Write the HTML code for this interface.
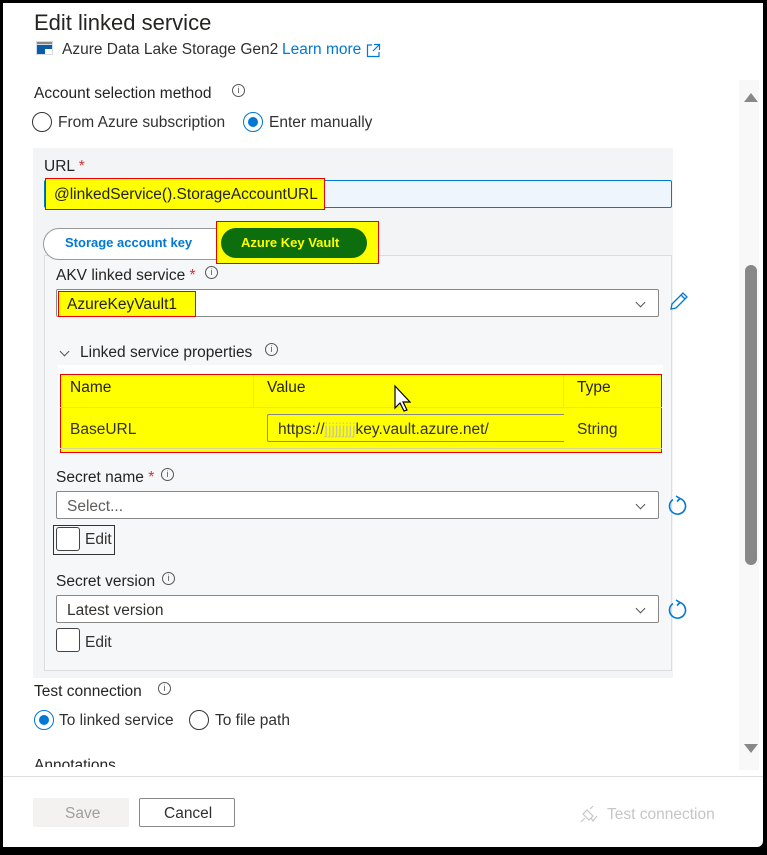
<!DOCTYPE html>
<html><head><meta charset="utf-8"><style>
*{box-sizing:border-box;margin:0;padding:0}
body{width:767px;height:855px;background:#000;font-family:"Liberation Sans",sans-serif;color:#323130;position:relative;overflow:hidden}
.page{position:absolute;left:3px;top:3px;width:760px;height:844px;background:#fff;border-radius:0 0 6px 0}
.a{position:absolute}
.t{font-size:15.5px;white-space:nowrap}
.lb{font-weight:500;color:#252423}
.radio{position:absolute;width:20px;height:20px;border:1px solid #333;border-radius:50%;background:#fff}
.radio.on{border-color:#0078d4}
.radio.on:after{content:"";position:absolute;left:4px;top:4px;width:10px;height:10px;border-radius:50%;background:#0078d4}
.info{position:absolute;width:13px;height:13px;border:1px solid #555;border-radius:50%;font-size:9px;line-height:11px;text-align:center;color:#555}
.req{color:#d13438}
.input{position:absolute;background:#fff;border:1px solid #8a8886;border-radius:2px}
.chev{position:absolute;width:7px;height:7px;border-right:1px solid #555;border-bottom:1px solid #555;transform:rotate(45deg)}
.cb{position:absolute;width:24px;height:24px;border:1px solid #444;border-radius:3px;background:#fff}
</style></head><body>
<div class="page">
<div class="a" style="left:31px;top:7px;font-size:22px;color:#252423">Edit linked service</div>
<svg class="a" style="left:33px;top:38px" width="17" height="14"><rect width="17" height="14" fill="#d6dae0"/><rect x="1" y="4" width="15" height="9" fill="#0a5ca8"/><rect x="9" y="8" width="7" height="5" fill="#fff"/><rect x="1" y="1" width="15" height="2" fill="#888"/></svg>
<div class="a t" style="left:59px;top:38px">Azure Data Lake Storage Gen2</div>
<div class="a t" style="left:279px;top:38px;color:#0078d4">Learn more</div>
<svg class="a" style="left:363px;top:40px" width="15" height="15" fill="none" stroke="#0078d4" stroke-width="1.2"><path d="M6 2H1.5v11.5H13V9M8 1.5h5.5V7M13.5 1.5L7 8"/></svg>

<div class="a t lb" style="left:31px;top:82px">Account selection method</div>
<div class="info" style="left:229px;top:81px">i</div>
<div class="radio" style="left:29px;top:109px"></div>
<div class="a t" style="left:55px;top:111px">From Azure subscription</div>
<div class="radio on" style="left:240px;top:109px"></div>
<div class="a t" style="left:266px;top:111px">Enter manually</div>

<div class="a" style="left:30px;top:145px;width:640px;height:530px;background:#f3f4f6"></div>
<div class="a t lb" style="left:41px;top:155px">URL <span class="req">*</span></div>
<div class="a" style="left:41px;top:177px;width:628px;height:28px;background:#eef5fd;border:1px solid #0078d4;border-radius:2px"></div>
<div class="a" style="left:42px;top:175px;width:280px;height:32px;background:#ffff00;border:1px solid #e00"></div>
<div class="a t" style="left:51px;top:183px;color:#222">@linkedService().StorageAccountURL</div>

<div class="a" style="left:41px;top:252px;width:628px;height:416px;background:#f6f7f9;border:1px solid #ddd"></div>
<div class="a" style="left:40px;top:225px;width:336px;height:32px;border:1px solid #999;border-radius:16px;background:#fff"></div>
<div class="a" style="left:62px;top:232px;font-size:13px;font-weight:bold;color:#0078d4">Storage account key</div>
<div class="a" style="left:213px;top:218px;width:163px;height:43px;background:#ffff00;border:1px solid #e00"></div>
<div class="a" style="left:218px;top:225px;width:146px;height:30px;border-radius:15px;background:#0d6e0d"></div>
<div class="a" style="left:238px;top:232px;font-size:13px;font-weight:bold;color:#ffff00">Azure Key Vault</div>

<div class="a t lb" style="left:53px;top:264px">AKV linked service <span class="req">*</span></div>
<div class="info" style="left:202px;top:263px">i</div>
<div class="input" style="left:53px;top:286px;width:603px;height:28px"></div>
<div class="a" style="left:55px;top:288px;width:138px;height:26px;background:#ffff00;border:1px solid #e00"></div>
<div class="a t" style="left:64px;top:293px;color:#222">AzureKeyVault1</div>
<div class="chev" style="left:634px;top:296px"></div>
<svg class="a" style="left:666px;top:288px" width="20" height="20" fill="none" stroke="#0078d4" stroke-width="1.3"><path d="M2 18l1-5L14 2l4 4L7 17z M12 4l4 4"/></svg>

<div class="chev" style="left:58px;top:345px"></div>
<div class="a t lb" style="left:77px;top:341px">Linked service properties</div>
<div class="info" style="left:262px;top:340px">i</div>
<div class="a" style="left:55px;top:362px;width:605px;height:88px;background:#fff"></div>
<div class="a" style="left:57px;top:371px;width:602px;height:79px;background:#ffff00;border:1px solid #e00"></div>
<div class="a" style="left:57px;top:404px;width:602px;height:1px;background:#d8d8a0"></div>
<div class="a" style="left:57px;top:445px;width:602px;height:1px;background:#d8d8a0"></div>
<div class="a" style="left:250px;top:372px;width:1px;height:32px;background:#d8d8a0"></div>
<div class="a" style="left:560px;top:372px;width:1px;height:32px;background:#d8d8a0"></div>
<div class="a t lb" style="left:67px;top:376px">Name</div>
<div class="a t lb" style="left:264px;top:376px">Value</div>
<div class="a t lb" style="left:574px;top:376px">Type</div>
<div class="a t" style="left:67px;top:418px">BaseURL</div>
<div class="a" style="left:264px;top:411px;width:297px;height:28px;border:1px solid #888;border-right:none;border-radius:2px 0 0 2px"></div>
<div class="a t" style="left:275px;top:418px">https://<span style="color:#c8c890">jjjjjjjjj</span>key.vault.azure.net/</div>
<div class="a t" style="left:574px;top:418px">String</div>
<svg class="a" style="left:390px;top:381px" width="22" height="30"><path d="M2 2v22l5-5 4 8 3-1-4-8h7z" fill="#fff" stroke="#000" stroke-width="1.2"/></svg>

<div class="a t lb" style="left:53px;top:466px">Secret name <span class="req">*</span></div>
<div class="info" style="left:158px;top:465px">i</div>
<div class="input" style="left:53px;top:488px;width:603px;height:28px"></div>
<div class="a t" style="left:64px;top:495px;color:#605e5c">Select...</div>
<div class="chev" style="left:634px;top:498px"></div>
<svg class="a" style="left:664px;top:492px" width="22" height="22" fill="none" stroke="#0078d4" stroke-width="1.6"><path d="M13 3.5A8 8 0 1 1 6 4.5"/><path d="M9 1l4 2.5-3 3"/></svg>
<div class="a" style="left:50px;top:522px;width:62px;height:30px;border:1px solid #333"></div>
<div class="cb" style="left:53px;top:524px"></div>
<div class="a t" style="left:82px;top:528px">Edit</div>

<div class="a t lb" style="left:53px;top:570px">Secret version</div>
<div class="info" style="left:159px;top:569px">i</div>
<div class="input" style="left:53px;top:592px;width:603px;height:28px"></div>
<div class="a t" style="left:64px;top:599px">Latest version</div>
<div class="chev" style="left:634px;top:602px"></div>
<svg class="a" style="left:664px;top:596px" width="22" height="22" fill="none" stroke="#0078d4" stroke-width="1.6"><path d="M13 3.5A8 8 0 1 1 6 4.5"/><path d="M9 1l4 2.5-3 3"/></svg>
<div class="cb" style="left:53px;top:625px"></div>
<div class="a t" style="left:82px;top:631px">Edit</div>

<div class="a t lb" style="left:31px;top:680px">Test connection</div>
<div class="info" style="left:155px;top:679px">i</div>
<div class="radio on" style="left:31px;top:707px"></div>
<div class="a t" style="left:56px;top:709px">To linked service</div>
<div class="radio" style="left:186px;top:707px"></div>
<div class="a t" style="left:212px;top:709px">To file path</div>
<div class="a t lb" style="left:31px;top:754px;height:10px;overflow:hidden">Annotations</div>

<div class="a" style="left:736px;top:77px;width:20px;height:690px;background:#f8f8f8"></div>
<div class="a" style="left:741px;top:90px;width:0;height:0;border-left:7px solid transparent;border-right:7px solid transparent;border-bottom:9px solid #888"></div>
<div class="a" style="left:742px;top:262px;width:12px;height:300px;background:#888;border-radius:6px"></div>
<div class="a" style="left:741px;top:741px;width:0;height:0;border-left:7px solid transparent;border-right:7px solid transparent;border-top:9px solid #888"></div>

<div class="a" style="left:0;top:773px;width:760px;height:1px;background:#ddd"></div>
<div class="a" style="left:30px;top:795px;width:96px;height:29px;background:#f3f2f1;border-radius:2px"></div>
<div class="a t" style="left:62px;top:802px;color:#a19f9d">Save</div>
<div class="a" style="left:136px;top:795px;width:96px;height:29px;border:1px solid #8a8886;border-radius:2px"></div>
<div class="a t" style="left:161px;top:802px">Cancel</div>
<svg class="a" style="left:576px;top:801px" width="20" height="20" fill="none" stroke="#c8c6c4" stroke-width="1.2"><path d="M2 18l4-4M14 2l-3 3M4 10l6 6 4-4-6-6z M12 14l2 3 4-5"/></svg>
<div class="a t" style="left:604px;top:803px;color:#c8c6c4">Test connection</div>
</div>
</body></html>
